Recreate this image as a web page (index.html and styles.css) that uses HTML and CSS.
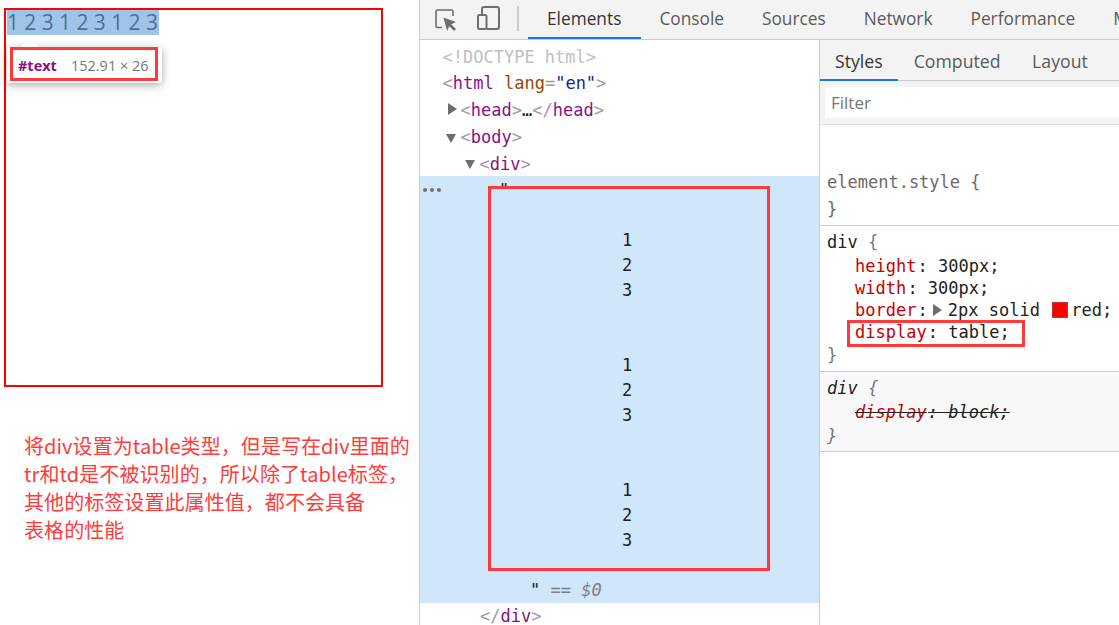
FILE: index.html
```html
<!DOCTYPE html>
<html lang="zh">
<head>
<meta charset="utf-8">
<title>display: table</title>
<link rel="stylesheet" href="styles.css">
</head>
<body>
<div class="page">
  <section class="viewport">
    <div class="demo">
      <span class="demo-text">1 2 3 1 2 3 1 2 3</span>
      <div class="tip">
        <span class="tip-arrow"></span>
        <span class="tip-name">#text</span><span class="tip-size">152.91 × 26</span>
      </div>
      <div class="mark mark-tip"></div>
    </div>
    <div class="note">
      <div>将div设置为table类型，但是写在div里面的</div>
      <div>tr和td是不被识别的，所以除了table标签，</div>
      <div>其他的标签设置此属性值，都不会具备</div>
      <div>表格的性能</div>
    </div>
  </section>
  <section class="devtools">
    <header class="toolbar">
      <svg class="ico ico-inspect" width="24" height="24" viewBox="0 0 24 24">
        <path d="M8 19.5H3.5A1.5 1.5 0 0 1 2 18V3.5A1.5 1.5 0 0 1 3.5 2h14A1.5 1.5 0 0 1 19 3.5V8" fill="none" stroke="#6e6e6e" stroke-width="1.6"/>
        <path d="M9.5 9.5l12.5 4.6-4.8 2.2 4.8 4.8-1.9 1.9-4.8-4.8-2.2 4.8z" fill="#6e6e6e"/>
      </svg>
      <svg class="ico ico-device" width="26" height="26" viewBox="0 0 26 26">
        <path d="M6 10V4a2 2 0 0 1 2-2h13a2 2 0 0 1 2 2v18a2 2 0 0 1-2 2H11" fill="none" stroke="#6e6e6e" stroke-width="2"/>
        <rect x="2" y="10" width="8.5" height="14" rx="1.5" fill="none" stroke="#6e6e6e" stroke-width="2"/>
      </svg>
      <span class="divider"></span>
      <nav class="tabs">
        <span class="tab tab-on">Elements</span>
        <span class="tab">Console</span>
        <span class="tab">Sources</span>
        <span class="tab">Network</span>
        <span class="tab">Performance</span>
        <span class="tab">Memory</span>
      </nav>
    </header>
    <div class="panes">
      <div class="dom">
        <div class="row ind0 doctype">&lt;!DOCTYPE html&gt;</div>
        <div class="row ind0"><span class="br">&lt;</span><span class="tag">html</span> <span class="attr">lang</span><span class="br">=</span><span class="val">"en"</span><span class="br">&gt;</span></div>
        <div class="row ind1"><span class="tri tri-r"></span><span class="br">&lt;</span><span class="tag">head</span><span class="br">&gt;</span>…<span class="br">&lt;/</span><span class="tag">head</span><span class="br">&gt;</span></div>
        <div class="row ind1 row-low"><span class="tri tri-d"></span><span class="br">&lt;</span><span class="tag">body</span><span class="br">&gt;</span></div>
        <div class="row ind2 row-low"><span class="tri tri-d"></span><span class="br">&lt;</span><span class="tag">div</span><span class="br">&gt;</span></div>
        <div class="selected">
          <div class="line line-open"><span class="dots"><i></i><i></i><i></i></span>"</div>
          <div class="line"></div>
          <div class="line num">1</div>
          <div class="line num">2</div>
          <div class="line num">3</div>
          <div class="line"></div>
          <div class="line"></div>
          <div class="line num">1</div>
          <div class="line num">2</div>
          <div class="line num">3</div>
          <div class="line"></div>
          <div class="line"></div>
          <div class="line num">1</div>
          <div class="line num">2</div>
          <div class="line num">3</div>
          <div class="line"></div>
          <div class="line line-close">" <span class="eq">== $0</span></div>
          <div class="mark mark-dom"></div>
        </div>
        <div class="row ind3"><span class="br">&lt;/</span><span class="tag">div</span><span class="br">&gt;</span></div>
      </div>
      <aside class="side">
        <nav class="subtabs">
          <span class="subtab subtab-on">Styles</span>
          <span class="subtab">Computed</span>
          <span class="subtab">Layout</span>
        </nav>
        <div class="filterbar"><div class="filter">Filter</div></div>
        <div class="rule rule-el">
          <div class="css sel-muted">element.style {</div>
          <div class="css css-end sel-muted">}</div>
        </div>
        <div class="rule rule-div">
          <div class="ln"><span class="selname">div</span> <span class="brace">{</span></div>
          <div class="decls">
            <div class="ln ind"><span class="prop">height</span>: 300px;</div>
            <div class="ln ind"><span class="prop">width</span>: 300px;</div>
            <div class="ln ind"><span class="prop">border</span>:<span class="tri tri-r tri-css"></span>2px solid <span class="swatch"></span>red;</div>
            <div class="ln ind"><span class="prop">display</span>: table;</div>
          </div>
          <div class="ln ln-end brace">}</div>
          <div class="mark mark-css"></div>
        </div>
        <div class="rule rule-ua">
          <div class="ln"><span class="selname">div</span> <span class="brace">{</span></div>
          <div class="ln ind struck"><span class="prop">display</span>: block;</div>
          <div class="ln ln-end brace">}</div>
        </div>
      </aside>
    </div>
  </section>
</div>
</body>
</html>
```
FILE: styles.css
```css
* { box-sizing: border-box; }
html, body { margin: 0; height: 100%; background: #fff; overflow: hidden; }
.page { display: flex; width: 1119px; height: 625px; overflow: hidden; }

/* left: page viewport */
.viewport { width: 420px; flex: none; border-right: 1px solid #ccc; padding: 8px 0 0 4px; }
.demo { position: relative; width: 379px; height: 379px; border: 2px solid #f00; }
.demo-text { position: absolute; left: 1px; top: 0; width: 152px; height: 25px; background: #9fc4e8; color: #4a6f99; font: 20.9px/25px "Open Sans", sans-serif; white-space: nowrap; }
.tip { position: absolute; left: 1px; top: 37px; width: 155px; height: 36px; background: #fff; border-radius: 3px; box-shadow: 0 2px 8px rgba(0,0,0,.35); display: flex; align-items: center; padding: 0 0 0 11px; font-family: "Open Sans", sans-serif; font-size: 14.5px; white-space: nowrap; }
.tip-arrow { position: absolute; left: 14px; top: -9px; width: 0; height: 0; border: 9px solid transparent; border-top: 0; border-bottom-color: #fff; }
.tip-name { color: #881280; font-weight: 700; margin-right: 14px; }
.tip-size { color: #777; }
.note { margin: 45px 0 0 20px; color: #ff3b3b; font: 20px/28px "Noto Sans CJK SC", sans-serif; letter-spacing: .07px; white-space: nowrap; }

/* marks */
.mark { position: absolute; border: 3px solid #ff3a3a; pointer-events: none; }
.mark-tip { left: 4px; top: 37px; width: 148px; height: 34px; }
.mark-dom { left: 68px; top: 10px; width: 282px; height: 385px; }
.mark-css { left: 27px; top: 94px; width: 178px; height: 27px; }

/* right: devtools */
.devtools { flex: 1; min-width: 0; display: flex; flex-direction: column; font-family: "DejaVu Sans Mono", monospace; }
.toolbar { height: 40px; flex: none; background: #f3f3f3; border-bottom: 1px solid #ccc; display: flex; align-items: stretch; overflow: hidden; }
.ico { flex: none; align-self: center; }
.ico-inspect { margin-left: 14px; }
.ico-device { margin-left: 18px; margin-top: -3px; }
.divider { width: 2px; height: 25px; background: #ccc; align-self: center; margin: -2px 0 0 15px; flex: none; }
.tabs { display: flex; margin-left: 9px; font: 17.3px/38px "Open Sans", sans-serif; color: #5a5a5a; white-space: nowrap; }
.tab { padding: 0 19px; height: 39px; }
.tab-on { color: #333; border-bottom: 2px solid #1a73e8; padding-right: 20px; }
.tab-on + .tab { margin-left: -1px; }

.panes { flex: 1; display: flex; min-height: 0; }
.dom { width: 400px; flex: none; border-right: 1px solid #ccc; padding-top: 4px; font-size: 17px; color: #222; white-space: nowrap; overflow: hidden; }
.row { height: 26.4px; line-height: 27.4px; position: relative; }
.row-low { line-height: 28.4px; }
.ind0 { padding-left: 22.5px; }
.ind1 { padding-left: 40.5px; }
.ind2 { padding-left: 59.5px; }
.ind3 { padding-left: 60px; }
.doctype { color: #c0c0c0; }
.br { color: #a894a6; }
.tag { color: #881280; }
.attr { color: #994500; }
.val { color: #1a1aa6; }
.tri { display: inline-block; width: 0; height: 0; }
.tri-r { border-left: 9px solid #6e6e6e; border-top: 6px solid transparent; border-bottom: 6px solid transparent; margin: 0 4px 3px -13px; vertical-align: middle; }
.tri-d { border-top: 9px solid #6e6e6e; border-left: 5px solid transparent; border-right: 5px solid transparent; margin: 0 5px 0 -15px; vertical-align: middle; }
.selected { position: relative; height: 427px; background: #cfe6fb; padding-top: 2px; }
.line { height: 25px; line-height: 25px; }
.line-open { display: flex; }
.dots { width: 79px; display: flex; gap: 3px; align-items: center; padding-left: 3px; flex: none; }
.dots i { width: 4px; height: 4px; border-radius: 50%; background: #6e6e6e; }
.num { padding-left: 202px; }
.line-close { padding-left: 110px; }
.eq { color: #7b7f85; font-style: italic; }

.side { flex: 1; min-width: 0; font-size: 17px; color: #222; white-space: nowrap; overflow: hidden; }
.subtabs { height: 41px; background: #f3f3f3; border-bottom: 1px solid #ccc; display: flex; font: 17.7px/42px "Open Sans", sans-serif; color: #5a5a5a; }
.subtab { padding: 0 15px; height: 41px; margin-right: 1.5px; }
.subtab-on { color: #333; border-bottom: 2px solid #1a73e8; padding-right: 15.5px; margin-right: .5px; }
.filterbar { height: 44px; background: #f3f3f3; border-bottom: 1px solid #e0e0e0; padding: 6px 0 6px 5px; }
.filter { height: 31px; background: #fff; padding-left: 6px; font: 17px/32px "Open Sans", sans-serif; color: #757575; }
.rule { position: relative; padding-left: 7px; border-bottom: 1px solid #ccc; }
.rule-el { height: 101px; padding-top: 44px; }
.css { height: 26px; line-height: 26px; }
.css-end { line-height: 28px; }
.sel-muted { color: #6a6a6a; }
.rule-div { height: 146px; padding-top: 5px; }
.ln { height: 22px; line-height: 22px; }
.decls { margin-top: 2px; }
.ln-end { line-height: 24px; }
.ind { padding-left: 28px; }
.prop { color: #c80000; margin-right: 1.2px; }
.brace { color: #777; }
.tri-css { margin: 0 6px 2px 5px; }
.swatch { display: inline-block; width: 16px; height: 16px; background: #f00; border: 1px solid #c33; margin: 0 3px -2px 2px; }
.rule-ua { height: 80px; padding-top: 5px; background: #f8f8f8; }
.rule-ua .ln { font-style: italic; }
.rule-ua .ln + .ln { margin-top: 2px; }
.rule-ua .ln + .ln + .ln { margin-top: 0; line-height: 26px; }
.struck { text-decoration: line-through; text-decoration-color: #222; }
```
